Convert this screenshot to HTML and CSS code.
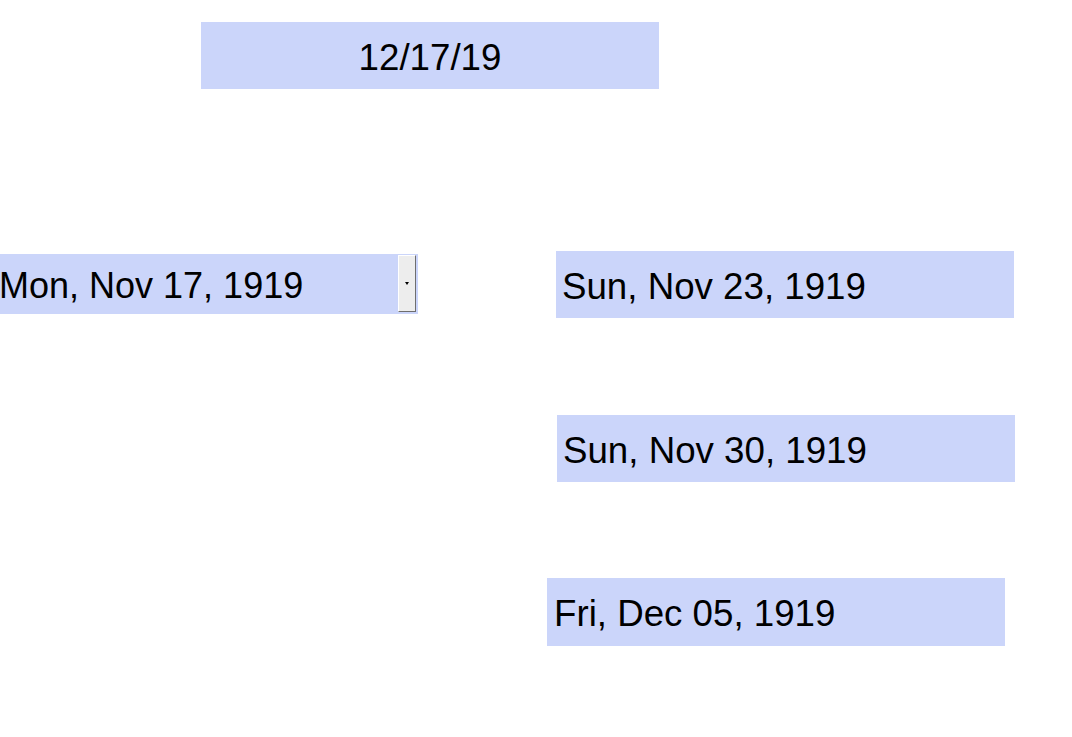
FILE: index.html
```html
<!DOCTYPE html>
<html>
<head>
<meta charset="utf-8">
<link rel="stylesheet" href="styles.css">
</head>
<body>
<div class="page">
  <div class="field field-top">12/17/19</div>
  <div class="row">
    <div class="field field-drop">
      <span class="drop-text">Mon, Nov 17, 1919</span>
      <span class="drop-btn"><span class="arrow"></span></span>
    </div>
    <div class="col">
      <div class="field field-a">Sun, Nov 23, 1919</div>
      <div class="field field-b">Sun, Nov 30, 1919</div>
      <div class="field field-c">Fri, Dec 05, 1919</div>
    </div>
  </div>
</div>
</body>
</html>
```

FILE: styles.css
```css
html, body {
  margin: 0;
  padding: 0;
  background: #ffffff;
}
.page {
  width: 1072px;
  height: 737px;
  overflow: hidden;
  font-family: "Liberation Sans", Arial, sans-serif;
  font-size: 36.7px;
  color: #000000;
}
.field {
  box-sizing: border-box;
  background: #cbd5fa;
  width: 458px;
  height: 67px;
  display: flex;
  align-items: center;
  padding-left: 6px;
  padding-top: 4px;
  white-space: nowrap;
}
.field-top {
  margin: 22px 0 0 201px;
  justify-content: center;
  padding-left: 0;
}
.row {
  display: flex;
  align-items: flex-start;
  margin-top: 162px;
}
.field-drop {
  margin-left: -6px;
  margin-top: 3px;
  width: 424px;
  height: 60px;
  padding-left: 5px;
  padding-right: 2px;
  padding-top: 0;
  justify-content: space-between;
}
.drop-text {
  padding-top: 4px;
  font-size: 36px;
}
.drop-btn {
  box-sizing: border-box;
  width: 18px;
  height: 57px;
  background: #ededed;
  border-top: 1px solid #ffffff;
  border-left: 1px solid #ffffff;
  border-right: 1px solid #6e6e6e;
  border-bottom: 1px solid #6e6e6e;
  display: flex;
  align-items: center;
  justify-content: center;
  margin-top: -1px;
}
.arrow {
  width: 0;
  height: 0;
  border-left: 2px solid transparent;
  border-right: 2px solid transparent;
  border-top: 3px solid #000000;
}
.col {
  display: flex;
  flex-direction: column;
  margin-left: 138px;
}
.field-a {
  margin-left: 0;
}
.field-b {
  margin-left: 1px;
  margin-top: 97px;
}
.field-c {
  margin-left: -9px;
  margin-top: 96px;
  padding-left: 7px;
  height: 68px;
}
```
